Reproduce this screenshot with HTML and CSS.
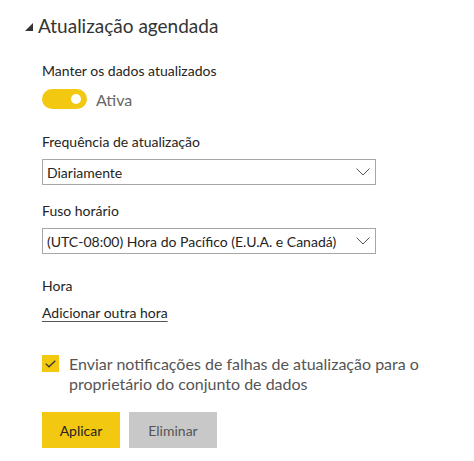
FILE: index.html
```html
<!DOCTYPE html>
<html lang="pt">
<head>
<meta charset="utf-8">
<title>Atualização agendada</title>
<link rel="stylesheet" href="styles.css">
</head>
<body>
<div class="panel">
  <div class="title">
    <svg class="caret" width="8" height="8" viewBox="0 0 8 8"><polygon points="8,0 8,8 0,8" fill="#333"/></svg>
    <span>Atualização agendada</span>
  </div>
  <div class="content">
    <div class="label first">Manter os dados atualizados</div>
    <div class="toggle-row">
      <div class="toggle"><div class="knob"></div></div>
      <span class="toggle-text">Ativa</span>
    </div>

    <div class="label freq">Frequência de atualização</div>
    <div class="select">
      <span>Diariamente</span>
      <svg class="chev" width="14" height="8" viewBox="0 0 14 8"><polyline points="0.5,0.5 7,7 13.5,0.5" fill="none" stroke="#555" stroke-width="1"/></svg>
    </div>

    <div class="label tz">Fuso horário</div>
    <div class="select">
      <span>(UTC-08:00) Hora do Pacífico (E.U.A. e Canadá)</span>
      <svg class="chev" width="14" height="8" viewBox="0 0 14 8"><polyline points="0.5,0.5 7,7 13.5,0.5" fill="none" stroke="#555" stroke-width="1"/></svg>
    </div>

    <div class="label hora">Hora</div>
    <div class="link-row"><a class="link">Adicionar outra hora</a></div>

    <div class="check-row">
      <div class="checkbox">
        <svg width="11" height="8" viewBox="0 0 11 8"><polyline points="0.7,3.6 4,6.8 10.3,0.7" fill="none" stroke="#333" stroke-width="1.2"/></svg>
      </div>
      <div class="check-text">Enviar notificações de falhas de atualização para o proprietário do conjunto de dados</div>
    </div>

    <div class="buttons">
      <button class="btn primary">Aplicar</button>
      <button class="btn secondary">Eliminar</button>
    </div>
  </div>
</div>
</body>
</html>
```

FILE: styles.css
```css
html, body {
  margin: 0;
  padding: 0;
  background: #ffffff;
}

body {
  font-family: Lato, "Noto Sans", sans-serif;
  color: #252423;
}

.panel {
  padding: 14px 0 0 25px;
}

.title {
  display: flex;
  align-items: center;
  gap: 5px;
  font-size: 19px;
  line-height: 24px;
  color: #333333;
}

.caret {
  margin-top: 1px;
}

.content {
  padding-left: 17px;
  width: 334px;
}

.label {
  font-size: 14px;
  line-height: 20px;
  color: #252423;
}

.label.first { margin-top: 23px; }
.label.freq { margin-top: 22px; }
.label.tz { margin-top: 16px; }
.label.hora { margin-top: 22px; }

.toggle-row {
  display: flex;
  align-items: center;
  gap: 9px;
  margin-top: 7px;
  height: 22px;
}

.toggle {
  width: 45px;
  height: 20px;
  border-radius: 10px;
  background: #f2c811;
  position: relative;
}

.knob {
  position: absolute;
  right: 6px;
  top: 5px;
  width: 10px;
  height: 10px;
  border-radius: 50%;
  background: #ffffff;
}

.toggle-text {
  font-size: 16px;
  color: #666666;
}

.select {
  margin-top: 7px;
  height: 26px;
  box-sizing: border-box;
  border: 1px solid #a6a6a6;
  display: flex;
  align-items: center;
  justify-content: space-between;
  padding: 0 5px 0 4px;
  font-size: 14px;
  color: #252423;
}

.link-row {
  margin-top: 7px;
  font-size: 14px;
  line-height: 20px;
}

.link {
  color: #252423;
  text-decoration: underline;
  text-underline-offset: 3px;
  text-decoration-color: #555;
}

.check-row {
  display: flex;
  align-items: flex-start;
  gap: 10px;
  margin-top: 32px;
  width: 380px;
}

.checkbox {
  flex: none;
  width: 17px;
  height: 17px;
  background: #f2c811;
  display: flex;
  align-items: center;
  justify-content: center;
}

.check-text {
  font-size: 16px;
  line-height: 20px;
  color: #555555;
  margin-top: -1px;
}

.buttons {
  display: flex;
  gap: 9px;
  margin-top: 18px;
}

.btn {
  border: none;
  height: 36px;
  font-family: Lato, "Noto Sans", sans-serif;
  font-size: 14px;
  padding: 0;
}

.btn.primary {
  width: 78px;
  background: #f2c811;
  color: #252423;
}

.btn.secondary {
  width: 88px;
  background: #c8c8c8;
  color: #555555;
}
```
